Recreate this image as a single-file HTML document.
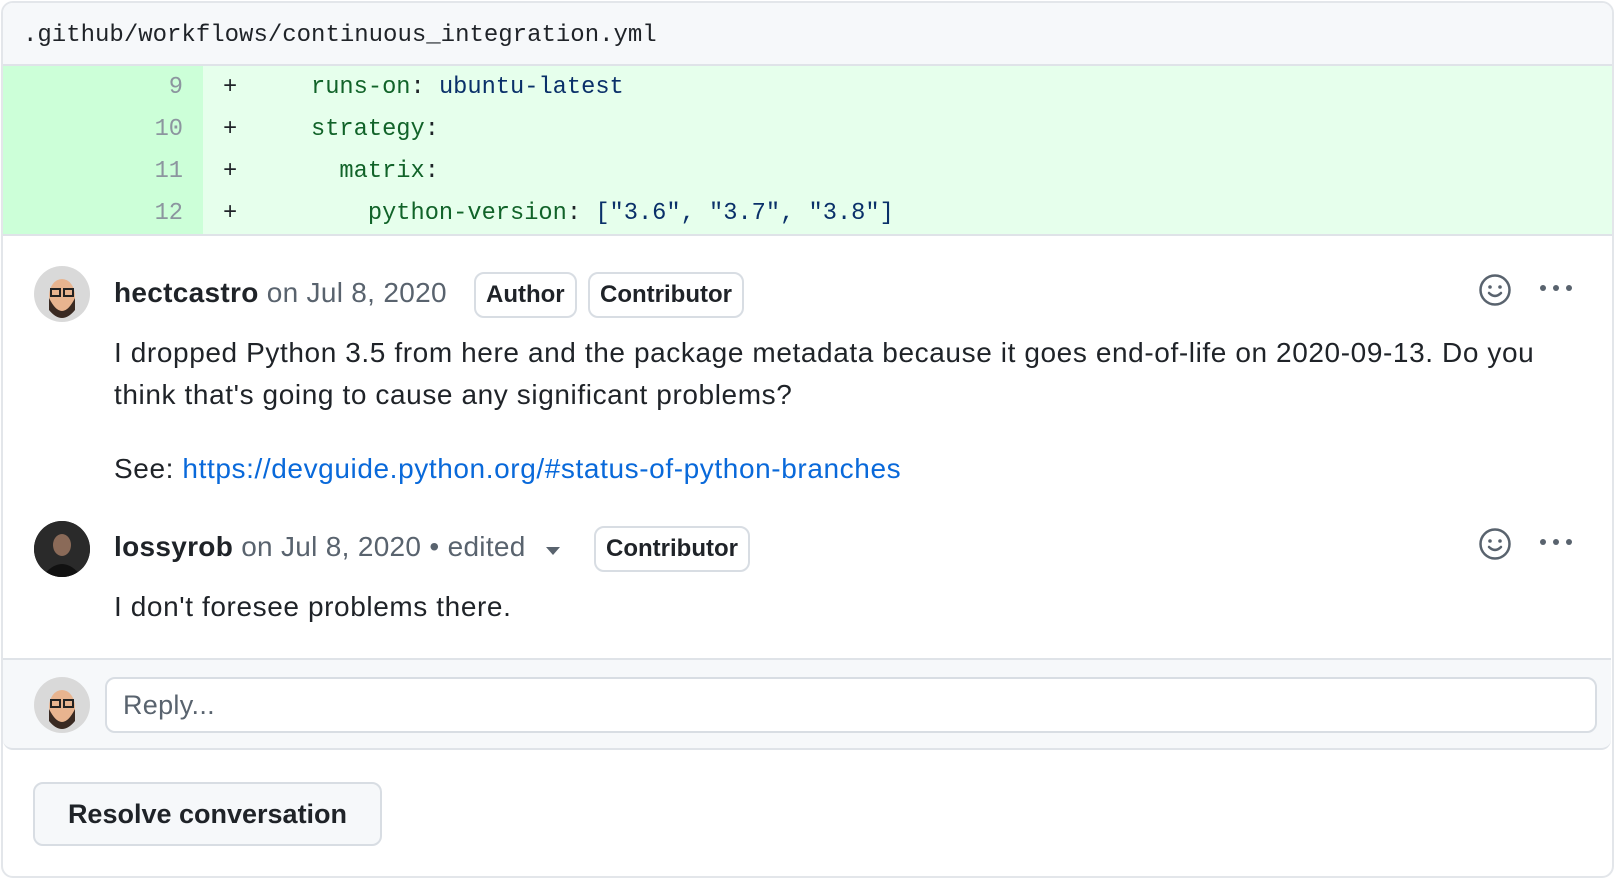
<!DOCTYPE html>
<html><head><meta charset="utf-8"><style>
*{box-sizing:border-box;margin:0;padding:0}
body{width:1616px;height:880px;background:#fff;font-family:"Liberation Sans",sans-serif;color:#1f2328;position:relative;overflow:hidden}
.box{position:absolute;left:1px;top:1px;width:1613px;height:877px;border:2px solid #e3e6ea;border-radius:12px;overflow:hidden}
.hdr{position:absolute;left:0;top:0;right:0;height:63px;background:#f6f8fa;border-bottom:2px solid #dfe3e8;font-family:"Liberation Mono",monospace;font-size:24px;line-height:66px;padding-left:20px;color:#1f2328}
.code{position:absolute;left:0;right:0;top:63px;height:170px;background:#e6ffec;border-bottom:2px solid #dfe3e8}
.gut{position:absolute;left:0;top:0;width:200px;height:100%;background:#ccffd8}
.row{position:absolute;left:0;right:0;height:42px;font-family:"Liberation Mono",monospace;font-size:23.7px;line-height:44px;white-space:pre}
.ln{position:absolute;left:120px;width:60px;text-align:right;color:#8c959f}
.pl{position:absolute;left:220px;color:#1f2328}
.tx{position:absolute;left:308px;color:#116329}
.v{color:#0a3069}
.k{color:#1f2328}
.av{position:absolute;width:56px;height:56px;border-radius:50%;overflow:hidden}
.meta{position:absolute;font-size:28px;letter-spacing:0.3px;white-space:nowrap;color:#59636e}
.meta b{color:#1f2328}
.badge{position:absolute;height:46px;border:2px solid #d8dde3;border-radius:10px;font-size:24px;line-height:42px;padding:0 10px;color:#1f2328;font-weight:600}
.p{position:absolute;left:114px;font-size:28px;letter-spacing:0.6px;white-space:nowrap;color:#1f2328}
a{color:#0969da;text-decoration:none}
.reply{position:absolute;top:658px;height:92px;background:#f6f8fa;border-top:2px solid #dfe3e8;border-bottom:2px solid #dfe3e8;border-radius:0 0 10px 10px}
.inp{position:absolute;top:17px;height:56px;background:#fff;border:2px solid #d8dde3;border-radius:10px;font-size:27px;line-height:52px;padding-left:16px;color:#59636e;letter-spacing:0.3px}
.btn{position:absolute;left:33px;top:782px;width:349px;height:64px;background:#f6f8fa;border:2px solid #d8dde3;border-radius:10px;font-size:27px;line-height:60px;text-align:center;font-weight:600;color:#1f2328}
.ic{position:absolute}
</style></head><body>
<div class="box">
<div class="hdr">.github/workflows/continuous_integration.yml</div>
<div class="code"><div class="gut"></div>
<div class="row" style="top:0"><span class="ln">9</span><span class="pl">+</span><span class="tx">runs-on<span class="k">:</span> <span class="v">ubuntu-latest</span></span></div>
<div class="row" style="top:42px"><span class="ln">10</span><span class="pl">+</span><span class="tx">strategy<span class="k">:</span></span></div>
<div class="row" style="top:84px"><span class="ln">11</span><span class="pl">+</span><span class="tx">  matrix<span class="k">:</span></span></div>
<div class="row" style="top:126px"><span class="ln">12</span><span class="pl">+</span><span class="tx">    python-version<span class="k">:</span> <span class="v">["3.6", "3.7", "3.8"]</span></span></div>
</div>
</div>

<div class="av" style="left:34px;top:266px;background:#d9d9d9"><svg width="56" height="56"><ellipse cx="28" cy="30" rx="13" ry="17" fill="#e8b48f"/><path d="M15 32 Q28 58 41 32 L41 44 Q28 60 15 44Z" fill="#3a2a22"/><rect x="17" y="23" width="9" height="7" fill="none" stroke="#222" stroke-width="2"/><rect x="30" y="23" width="9" height="7" fill="none" stroke="#222" stroke-width="2"/></svg></div>
<div class="meta" style="left:114px;top:277px"><b>hectcastro</b> on Jul 8, 2020</div>
<div class="badge" style="left:474px;top:272px">Author</div>
<div class="badge" style="left:588px;top:272px">Contributor</div>
<svg class="ic" style="left:1478px;top:273px" width="34" height="34" viewBox="0 0 34 34"><circle cx="17" cy="17" r="14.5" fill="none" stroke="#59636e" stroke-width="2.5"/><circle cx="12" cy="14" r="1.8" fill="#59636e"/><circle cx="22" cy="14" r="1.8" fill="#59636e"/><path d="M11 20 Q17 26 23 20" fill="none" stroke="#59636e" stroke-width="2.5" stroke-linecap="round"/></svg>
<svg class="ic" style="left:1538px;top:283px" width="36" height="10"><circle cx="5" cy="5" r="3" fill="#59636e"/><circle cx="18" cy="5" r="3" fill="#59636e"/><circle cx="31" cy="5" r="3" fill="#59636e"/></svg>
<div class="p" style="top:337px">I dropped Python 3.5 from here and the package metadata because it goes end-of-life on 2020-09-13. Do you</div>
<div class="p" style="top:379px">think that's going to cause any significant problems?</div>
<div class="p" style="top:453px">See: <a>https://devguide.python.org/#status-of-python-branches</a></div>

<div class="av" style="left:34px;top:521px;background:#222"><svg width="56" height="56"><rect width="56" height="56" fill="#2a2a2a"/><ellipse cx="28" cy="24" rx="9" ry="11" fill="#8a6a58"/><path d="M8 56 Q28 30 48 56Z" fill="#111"/></svg></div>
<div class="meta" style="left:114px;top:531px"><b>lossyrob</b> on Jul 8, 2020 • edited</div>
<svg class="ic" style="left:546px;top:547px" width="14" height="9"><path d="M0 0H14L7 8Z" fill="#59636e"/></svg>
<div class="badge" style="left:594px;top:526px">Contributor</div>
<svg class="ic" style="left:1478px;top:527px" width="34" height="34" viewBox="0 0 34 34"><circle cx="17" cy="17" r="14.5" fill="none" stroke="#59636e" stroke-width="2.5"/><circle cx="12" cy="14" r="1.8" fill="#59636e"/><circle cx="22" cy="14" r="1.8" fill="#59636e"/><path d="M11 20 Q17 26 23 20" fill="none" stroke="#59636e" stroke-width="2.5" stroke-linecap="round"/></svg>
<svg class="ic" style="left:1538px;top:537px" width="36" height="10"><circle cx="5" cy="5" r="3" fill="#59636e"/><circle cx="18" cy="5" r="3" fill="#59636e"/><circle cx="31" cy="5" r="3" fill="#59636e"/></svg>
<div class="p" style="top:591px">I don't foresee problems there.</div>

<div class="reply" style="left:3px;right:5px">
<div class="av" style="left:31px;top:17px;background:#d9d9d9"><svg width="56" height="56"><ellipse cx="28" cy="30" rx="13" ry="17" fill="#e8b48f"/><path d="M15 32 Q28 58 41 32 L41 44 Q28 60 15 44Z" fill="#3a2a22"/><rect x="17" y="23" width="9" height="7" fill="none" stroke="#222" stroke-width="2"/><rect x="30" y="23" width="9" height="7" fill="none" stroke="#222" stroke-width="2"/></svg></div>
<div class="inp" style="left:102px;width:1492px">Reply...</div>
</div>
<div class="btn">Resolve conversation</div>
</body></html>
